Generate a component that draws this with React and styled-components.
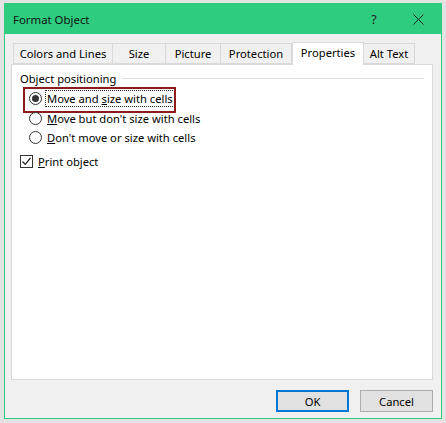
import React, { useState } from 'react';
import styled, { createGlobalStyle } from 'styled-components';

const GlobalStyle = createGlobalStyle`
  html, body {
    margin: 0;
    padding: 0;
    background: #e3e3e3;
  }
  body {
    font-family: "Noto Sans", "Open Sans", sans-serif;
    font-size: 11.2px;
    color: #000;
  }
`;

const Window = styled.div`
  margin: 3px 0 0 4px;
  width: 438px;
  height: 416px;
  box-sizing: border-box;
  border: 1px solid #2ecc7f;
  background: #f0f0f0;
  display: flex;
  flex-direction: column;
`;

const TitleBar = styled.div`
  height: 30px;
  background: #2ecc7f;
  display: flex;
  align-items: center;
  padding-left: 8px;
`;

const Title = styled.div`
  flex: 1;
  font-size: 11.4px;
  color: #111;
`;

const TitleButton = styled.div`
  width: ${p => p.$w}px;
  margin-right: ${p => p.$gap || 0}px;
  height: 30px;
  display: flex;
  align-items: center;
  justify-content: center;
  color: #222;
  font-size: 12.5px;
`;

const Body = styled.div`
  flex: 1;
  display: flex;
  flex-direction: column;
  padding: 7px 8px 0 6px;
`;

const TabRow = styled.div`
  display: flex;
  align-items: flex-end;
  padding-left: 2px;
  height: 23px;
`;

const Tab = styled.div`
  width: ${p => p.$w}px;
  height: ${p => (p.$active ? 23 : 21)}px;
  box-sizing: border-box;
  border: 1px solid #d9d9d9;
  border-bottom: ${p => (p.$active ? 'none' : '1px solid #d9d9d9')};
  border-left: ${p => (p.$first || p.$active ? '1px solid #d9d9d9' : 'none')};
  background: ${p => (p.$active ? '#fff' : '#f0f0f0')};
  display: flex;
  align-items: center;
  justify-content: center;
  padding-bottom: ${p => (p.$active ? 3 : 0)}px;
  margin-bottom: ${p => (p.$active ? -1 : 0)}px;
  position: relative;
  z-index: ${p => (p.$active ? 1 : 0)};
`;

const Panel = styled.div`
  height: 316px;
  box-sizing: border-box;
  background: #fff;
  border: 1px solid #d9d9d9;
  padding: 6px 8px 0 8px;
`;

const GroupHeader = styled.div`
  display: flex;
  align-items: center;
  gap: 6px;
  height: 15px;
`;

const GroupLine = styled.div`
  flex: 1;
  height: 1px;
  background: #dcdcdc;
`;

const OptionList = styled.div`
  display: flex;
  flex-direction: column;
  padding-left: 9px;
  margin-top: 3px;
`;

const OptionRow = styled.label`
  position: relative;
  display: flex;
  align-items: center;
  height: 19.5px;
  gap: 4px;
`;

const Highlight = styled.div`
  position: absolute;
  left: -6px;
  top: -2px;
  width: 153px;
  height: 26px;
  box-sizing: border-box;
  border: 2px solid #8e1b1b;
  pointer-events: none;
`;

const Radio = styled.span`
  width: 13px;
  height: 13px;
  box-sizing: border-box;
  border-radius: 50%;
  border: 1px solid #333;
  background: #fff;
  display: flex;
  align-items: center;
  justify-content: center;
  flex: none;
  &::after {
    content: '';
    width: 7px;
    height: 7px;
    border-radius: 50%;
    background: ${p => (p.$checked ? '#333' : 'transparent')};
  }
`;

const OptionText = styled.span`
  padding: 0 1px;
  outline: ${p => (p.$focus ? '1px dotted #333' : 'none')};
  line-height: 15px;
  white-space: nowrap;
`;

const Key = styled.span`
  text-decoration: underline;
`;

const CheckRow = styled.label`
  display: flex;
  align-items: center;
  gap: 4px;
  margin-top: 6px;
`;

const CheckBox = styled.span`
  width: 13px;
  height: 13px;
  box-sizing: border-box;
  border: 1px solid #333;
  background: #fff;
  display: flex;
  align-items: center;
  justify-content: center;
  flex: none;
`;

const Footer = styled.div`
  display: flex;
  justify-content: flex-end;
  gap: 11px;
  padding-top: 10px;
`;

const Button = styled.button`
  flex: none;
  width: 73px;
  height: 22px;
  box-sizing: border-box;
  font-family: inherit;
  font-size: 11.2px;
  color: #000;
  background: #e1e1e1;
  border: ${p => (p.$primary ? '2px solid #0078d7' : '1px solid #adadad')};
  padding: 0;
  margin: 0;
`;

const tabs = [
  { label: 'Colors and Lines', w: 100 },
  { label: 'Size', w: 53 },
  { label: 'Picture', w: 55 },
  { label: 'Protection', w: 71 },
  { label: 'Properties', w: 72 },
  { label: 'Alt Text', w: 51 },
];

const App = () => {
  const [active, setActive] = useState('Properties');
  const [position, setPosition] = useState('move-size');
  const [print, setPrint] = useState(true);

  return (
    <>
      <GlobalStyle />
      <Window>
        <TitleBar>
          <Title>Format Object</Title>
          <TitleButton $w={26} $gap={8}>?</TitleButton>
          <TitleButton $w={46}>
            <svg width="11" height="11" viewBox="0 0 11 11">
              <path d="M0.5 0.5 L10.5 10.5 M10.5 0.5 L0.5 10.5" stroke="#222" strokeWidth="1" fill="none" />
            </svg>
          </TitleButton>
        </TitleBar>
        <Body>
          <TabRow>
            {tabs.map((t, i) => (
              <Tab
                key={t.label}
                $w={t.w}
                $first={i === 0}
                $active={active === t.label}
                onClick={() => setActive(t.label)}
              >
                {t.label}
              </Tab>
            ))}
          </TabRow>
          <Panel>
            <GroupHeader>
              <span>Object positioning</span>
              <GroupLine />
            </GroupHeader>
            <OptionList>
              <OptionRow onClick={() => setPosition('move-size')}>
                <Highlight />
                <Radio $checked={position === 'move-size'} />
                <OptionText $focus>
                  Move and <Key>s</Key>ize with cells
                </OptionText>
              </OptionRow>
              <OptionRow onClick={() => setPosition('move')}>
                <Radio $checked={position === 'move'} />
                <OptionText>
                  <Key>M</Key>ove but don't size with cells
                </OptionText>
              </OptionRow>
              <OptionRow onClick={() => setPosition('none')}>
                <Radio $checked={position === 'none'} />
                <OptionText>
                  <Key>D</Key>on't move or size with cells
                </OptionText>
              </OptionRow>
            </OptionList>
            <CheckRow onClick={() => setPrint(!print)}>
              <CheckBox>
                {print && (
                  <svg width="11" height="11" viewBox="0 0 11 11">
                    <path d="M1.5 5.5 L4.2 8.3 L9.5 2" stroke="#222" strokeWidth="1.2" fill="none" />
                  </svg>
                )}
              </CheckBox>
              <OptionText>
                <Key>P</Key>rint object
              </OptionText>
            </CheckRow>
          </Panel>
          <Footer>
            <Button $primary>OK</Button>
            <Button>Cancel</Button>
          </Footer>
        </Body>
      </Window>
    </>
  );
};

export default App;
